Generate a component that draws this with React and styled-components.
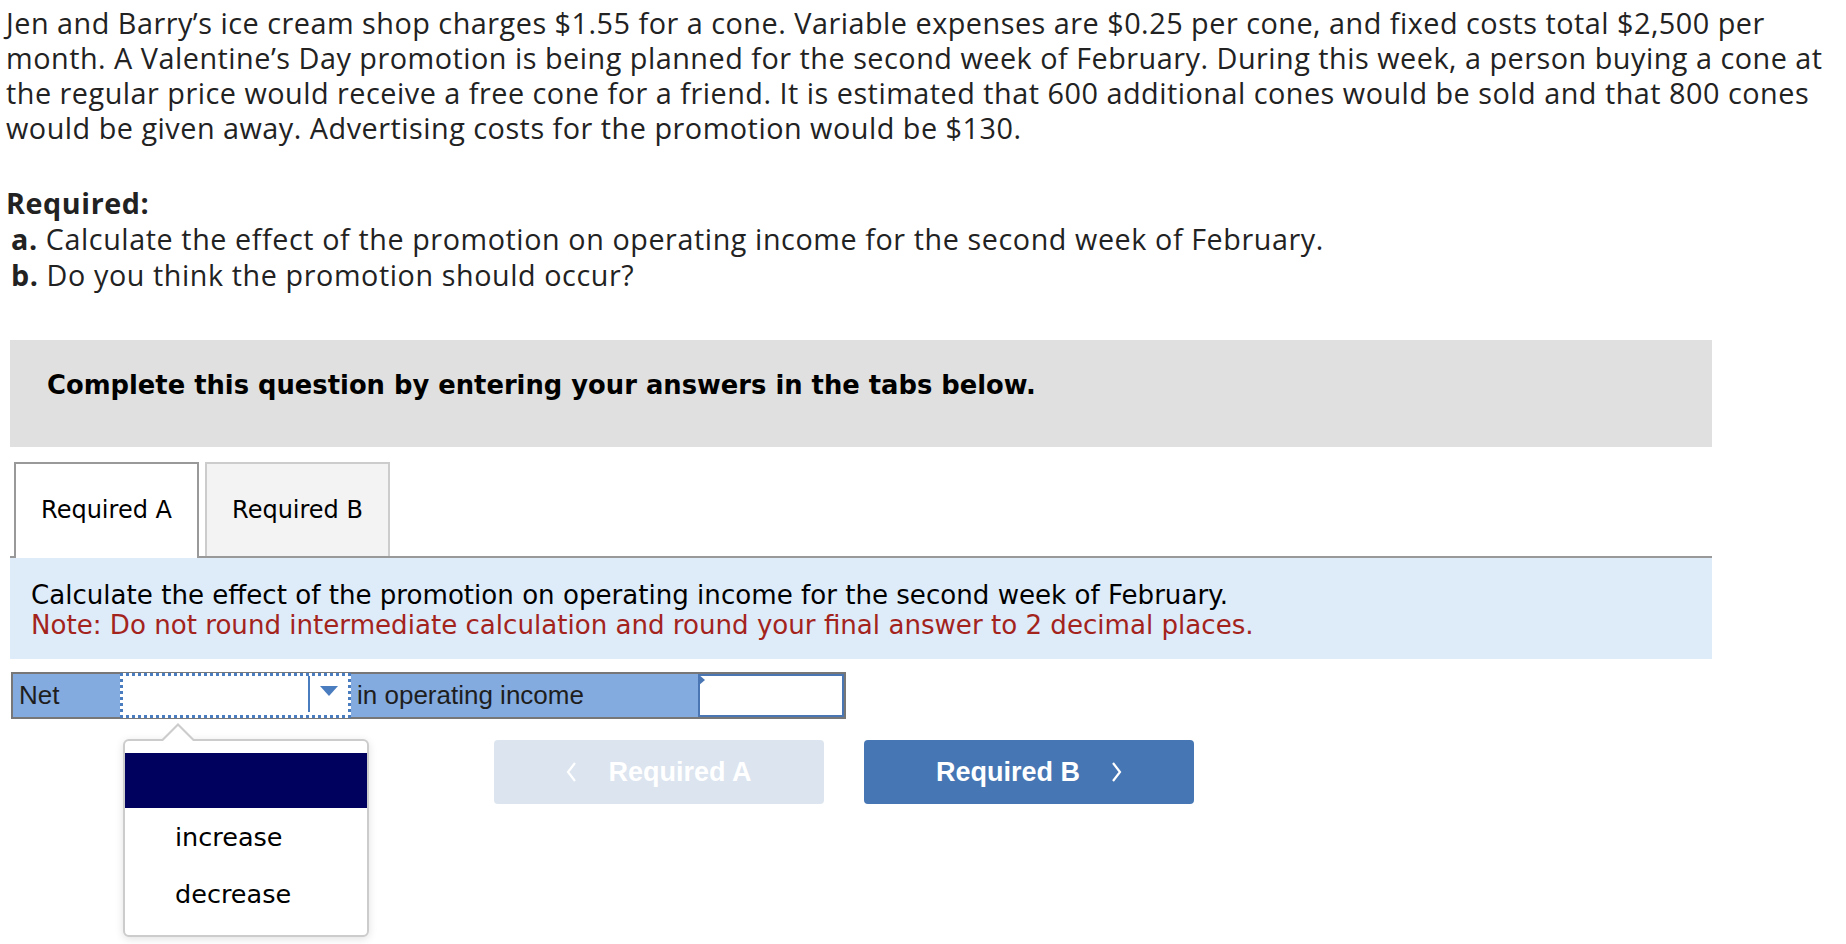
import React from "react"
import styled, { createGlobalStyle } from "styled-components"

const GlobalStyle = createGlobalStyle`
  body {
    margin: 0;
    background: #fff;
    font-family: "Open Sans", "Liberation Sans", sans-serif;
  }
`

function Chevron({ dir }) {
  const points = dir === "left" ? "9,2 2,11 9,20" : "2,2 9,11 2,20"
  return (
    <svg width="11" height="22" viewBox="0 0 11 22">
      <polyline points={points} fill="none" stroke="#fff" strokeWidth="2.2" />
    </svg>
  )
}

function SelectArrow() {
  return (
    <svg width="18" height="10" viewBox="0 0 18 10">
      <polygon points="0,0 18,0 9,10" fill="#4a7cc0" />
    </svg>
  )
}

export default function App() {
  return (
    <Page>
      <GlobalStyle />
      <Problem>
        Jen and Barry’s ice cream shop charges $1.55 for a cone. Variable
        expenses are $0.25 per cone, and fixed costs total $2,500 per month. A
        Valentine’s Day promotion is being planned for the second week of
        February. During this week, a person buying a cone at the regular price
        would receive a free cone for a friend. It is estimated that 600
        additional cones would be sold and that 800 cones would be given away.
        Advertising costs for the promotion would be $130.
      </Problem>

      <Required>
        <RequiredTitle>Required:</RequiredTitle>
        <RequiredItem>
          <b>a.</b> Calculate the effect of the promotion on operating income
          for the second week of February.
        </RequiredItem>
        <RequiredItem>
          <b>b.</b> Do you think the promotion should occur?
        </RequiredItem>
      </Required>

      <Question>
        <Banner>
          Complete this question by entering your answers in the tabs below.
        </Banner>

        <TabBar>
          <Tab $active>Required A</Tab>
          <Tab>Required B</Tab>
        </TabBar>

        <Instructions>
          <div>
            Calculate the effect of the promotion on operating income for the
            second week of February.
          </div>
          <Note>
            Note: Do not round intermediate calculation and round your final
            answer to 2 decimal places.
          </Note>
        </Instructions>

        <AnswerRow>
          <RowLabel>Net</RowLabel>
          <SelectBox>
            <SelectValue />
            <SelectDivider />
            <SelectToggle>
              <SelectArrow />
            </SelectToggle>
          </SelectBox>
          <RowText>in operating income</RowText>
          <AmountInput />

          <Menu>
            <MenuSelected />
            <MenuOption>increase</MenuOption>
            <MenuOption>decrease</MenuOption>
          </Menu>
        </AnswerRow>

        <NavRow>
          <NavButton $disabled>
            <Chevron dir="left" />
            Required A
          </NavButton>
          <NavButton>
            Required B
            <Chevron dir="right" />
          </NavButton>
        </NavRow>
      </Question>
    </Page>
  )
}

const Page = styled.div`
  min-height: 944px;
  box-sizing: border-box;
  padding: 5px 0 0;
`

const Problem = styled.p`
  margin: 0;
  padding: 0 0 0 6px;
  font-size: 28.8px;
  line-height: 35px;
  letter-spacing: 0.5px;
  color: #222;
`

const Required = styled.div`
  margin-top: 40px;
  padding-left: 6px;
  font-size: 28.7px;
  line-height: 36px;
  letter-spacing: 0.6px;
  color: #222;
`

const RequiredTitle = styled.div`
  font-weight: 700;
`

const RequiredItem = styled.div`
  padding-left: 5px;
`

const Question = styled.div`
  margin: 47px 0 0 10px;
  width: 1702px;
`

const Banner = styled.div`
  height: 107px;
  box-sizing: border-box;
  padding: 30px 0 0 37px;
  background: #e0e0e0;
  font-family: "DejaVu Sans", Verdana, sans-serif;
  font-weight: 700;
  font-size: 25.8px;
  line-height: 30px;
  color: #000;
`

const TabBar = styled.div`
  display: flex;
  gap: 6px;
  margin-top: 15px;
  padding-left: 4px;
  border-bottom: 2px solid #999;
`

const Tab = styled.div`
  width: 185px;
  box-sizing: border-box;
  display: flex;
  align-items: center;
  justify-content: center;
  margin-bottom: ${(p) => (p.$active ? "-2px" : "0")};
  height: ${(p) => (p.$active ? "96px" : "94px")};
  padding-bottom: ${(p) => (p.$active ? "2px" : "0")};
  border: 2px solid ${(p) => (p.$active ? "#999" : "#ccc")};
  border-bottom: none;
  background: ${(p) => (p.$active ? "#fff" : "#f3f3f3")};
  font-family: "DejaVu Sans", Verdana, sans-serif;
  font-size: 24px;
  color: #000;
`

const Instructions = styled.div`
  height: 101px;
  box-sizing: border-box;
  padding: 22px 21px 0;
  background: #deebf8;
  font-family: "DejaVu Sans", Verdana, sans-serif;
  font-size: 26.1px;
  line-height: 30px;
  color: #000;
`

const Note = styled.div`
  color: #a3231d;
`

const AnswerRow = styled.div`
  position: relative;
  display: flex;
  width: 835px;
  height: 47px;
  box-sizing: border-box;
  margin: 13px 0 0 1px;
  border: 2px solid #777;
  background: #83abdf;
  font-family: "Liberation Sans", Arial, sans-serif;
  font-size: 26px;
  color: #1e1e1e;
`

const RowLabel = styled.div`
  width: 107px;
  box-sizing: border-box;
  padding-left: 6px;
  display: flex;
  align-items: center;
`

const SelectBox = styled.div`
  width: 231px;
  box-sizing: border-box;
  margin: -1px 0;
  display: flex;
  border: 3px dotted #4a7cc0;
  background: #fff;
`

const SelectValue = styled.div`
  flex: 1;
`

const SelectDivider = styled.div`
  width: 2px;
  height: 36px;
  background: #4a7cc0;
`

const SelectToggle = styled.div`
  width: 38px;
  display: flex;
  justify-content: center;
  padding-top: 10px;
`

const RowText = styled.div`
  flex: 1;
  padding-left: 6px;
  display: flex;
  align-items: center;
`

const AmountInput = styled.div`
  position: relative;
  width: 146px;
  box-sizing: border-box;
  border: 2px solid #4a76b4;
  background: #fff;

  &::before {
    content: "";
    position: absolute;
    left: -2px;
    top: -2px;
    border-left: 7px solid #4a76b4;
    border-top: 6px solid transparent;
    border-bottom: 6px solid transparent;
  }
`

const Menu = styled.div`
  position: absolute;
  left: 110px;
  top: 65px;
  width: 246px;
  height: 198px;
  box-sizing: border-box;
  padding-top: 12px;
  border: 2px solid #ccc;
  border-radius: 6px;
  background: #fff;
  box-shadow: 0 2px 8px rgba(0, 0, 0, 0.12);
  font-family: "DejaVu Sans", Verdana, sans-serif;
  font-size: 25.5px;
  color: #000;
  z-index: 2;

  &::before,
  &::after {
    content: "";
    position: absolute;
    left: 36px;
    border-left: 17px solid transparent;
    border-right: 17px solid transparent;
    border-bottom: 17px solid #ccc;
  }
  &::before {
    top: -18px;
  }
  &::after {
    top: -15px;
    left: 37px;
    border-left-width: 16px;
    border-right-width: 16px;
    border-bottom: 16px solid #fff;
  }
`

const MenuSelected = styled.div`
  height: 55px;
  background: #00005f;
`

const MenuOption = styled.div`
  height: 57px;
  display: flex;
  align-items: center;
  padding-left: 50px;
`

const NavRow = styled.div`
  display: flex;
  gap: 40px;
  margin-top: 21px;
  padding-left: 484px;
`

const NavButton = styled.div`
  width: 330px;
  height: 64px;
  display: flex;
  align-items: center;
  justify-content: center;
  gap: 31px;
  border-radius: 4px;
  background: ${(p) => (p.$disabled ? "#dbe4ef" : "#4676b4")};
  font-family: "Liberation Sans", Arial, sans-serif;
  font-weight: 700;
  font-size: 27px;
  color: #fff;
`
